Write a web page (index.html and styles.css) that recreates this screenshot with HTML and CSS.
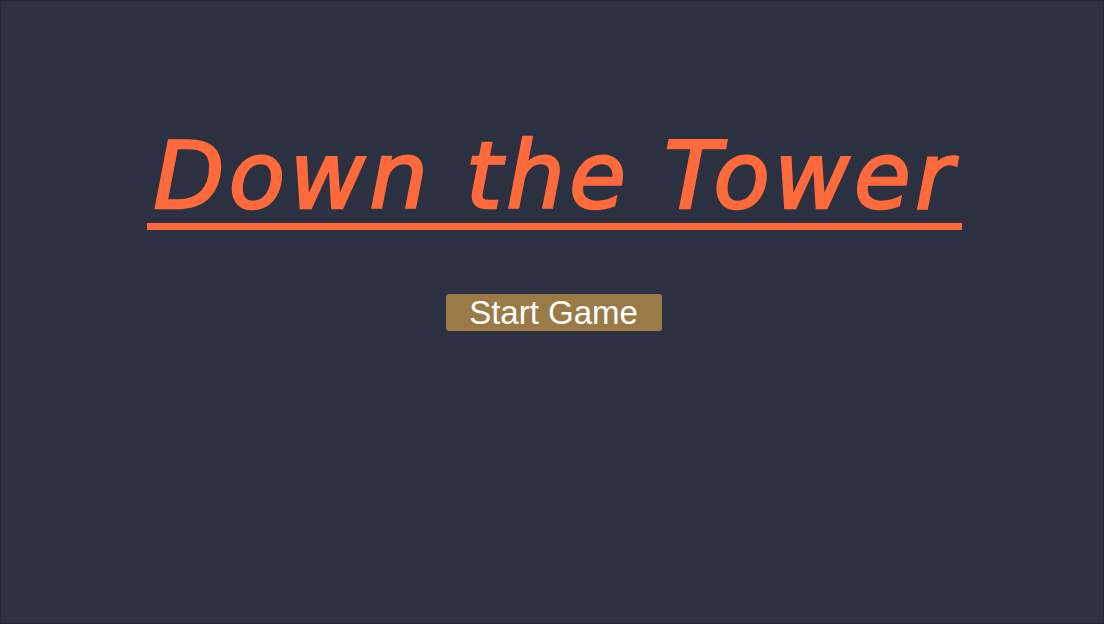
FILE: index.html
```html
<!DOCTYPE html>
<html>
<head>
<meta charset="utf-8">
<link rel="stylesheet" href="styles.css">
</head>
<body>
<main class="screen">
  <h1 class="title">Down the Tower</h1>
  <button class="start">Start Game</button>
</main>
</body>
</html>
```
FILE: styles.css
```css
html, body {
  margin: 0;
  padding: 0;
  height: 100%;
  background: #2b3140;
}
.screen {
  box-sizing: border-box;
  height: 624px;
  border: 1px solid #222733;
  padding-left: 5px;
  display: flex;
  flex-direction: column;
  align-items: center;
}
.title {
  margin: 130px 0 0 0;
  font-family: "DejaVu Sans", sans-serif;
  font-style: oblique;
  font-weight: normal;
  font-size: 92px;
  letter-spacing: 4.5px;
  line-height: 92px;
  -webkit-text-stroke: 2.6px #ff6a3d;
  color: #ff6a3d;
  border-bottom: 7px solid #ff6a3d;
  padding: 0 5px 0 7px;
}
.start {
  margin: 64px 2px 0 0;
  width: 216px;
  height: 37px;
  background: #9a7b47;
  border: none;
  border-radius: 3px;
  color: #ffffff;
  font-family: "Liberation Sans", Arial, sans-serif;
  font-size: 33px;
  line-height: 37px;
  padding: 0;
}
```
